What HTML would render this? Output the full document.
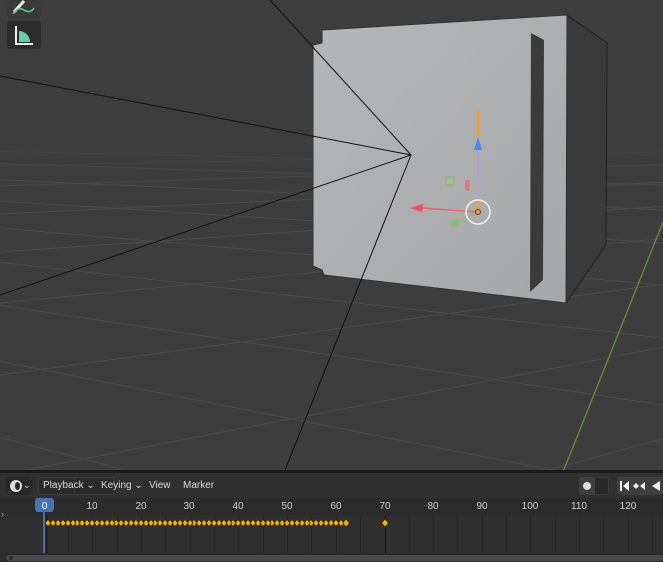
<!DOCTYPE html>
<html><head><meta charset="utf-8"><style>
*{margin:0;padding:0;box-sizing:border-box}
html,body{width:663px;height:562px;overflow:hidden}
body{background:#3d3d3d;font-family:"Liberation Sans",sans-serif;position:relative}
svg{position:absolute;left:0;top:0;display:block}
.t{position:absolute;color:#d8d8d8;font-size:10px;line-height:12px;white-space:nowrap}
</style></head><body>
<svg width="663" height="470" viewBox="0 0 663 470">
<defs>
<linearGradient id="g" x1="0" y1="0" x2="1" y2="1"><stop offset="0" stop-color="#b4b6b7"/><stop offset="1" stop-color="#a6a8a9"/></linearGradient>
<linearGradient id="fade" x1="0" y1="0" x2="0" y2="1"><stop offset="0" stop-color="#3d3d3d" stop-opacity="1"/><stop offset="0.55" stop-color="#3d3d3d" stop-opacity="1"/><stop offset="1" stop-color="#3d3d3d" stop-opacity="0"/></linearGradient>
</defs>
<rect width="663" height="470" fill="#3d3d3d"/>
<g stroke="#4b4b4b" stroke-width="1" fill="none">
<line x1="-1200" y1="125" x2="663" y2="166" opacity=".5"/>
<line x1="-1200" y1="125" x2="663" y2="185" opacity=".8"/>
<line x1="-1200" y1="125" x2="663" y2="210"/>
<line x1="-1200" y1="125" x2="663" y2="243"/>
<line x1="-1200" y1="125" x2="663" y2="285"/>
<line x1="-1200" y1="125" x2="663" y2="338"/>
<line x1="-1200" y1="125" x2="663" y2="405"/>
<line x1="-1200" y1="125" x2="663" y2="492"/>
<line x1="-1200" y1="125" x2="663" y2="610"/>
<line x1="-1200" y1="125" x2="663" y2="780"/>
<line x1="0" y1="166" x2="1800" y2="128" opacity=".5"/>
<line x1="0" y1="186" x2="1800" y2="128" opacity=".8"/>
<line x1="0" y1="214" x2="1800" y2="128"/>
<line x1="0" y1="252" x2="1800" y2="128"/>
<line x1="0" y1="303" x2="1800" y2="128"/>
<line x1="0" y1="375" x2="1800" y2="128"/>
<line x1="0" y1="475" x2="1800" y2="128"/>
<line x1="0" y1="620" x2="1800" y2="128"/>
<line x1="0" y1="830" x2="1800" y2="128"/>
<line x1="0" y1="1150" x2="1800" y2="128"/>
</g>
<rect x="0" y="0" width="663" height="150" fill="url(#fade)"/>
<line x1="663" y1="222" x2="563" y2="472" stroke="#6a8f2a" stroke-width="1.3"/>
<polygon points="567,15 607,43 606,245 566,303" fill="#3a3a3a" stroke="#222" stroke-width="1"/>
<polygon points="322,30 567,15 566,303 324,275 322,270 313,266 313,45 322,43" fill="url(#g)" stroke="#333" stroke-width="1"/>
<polygon points="531,33 544,40 543,280 530,292" fill="#3b3b3b"/>
<g stroke="#111" stroke-width="1" fill="none">
<line x1="270" y1="0" x2="411" y2="155"/>
<line x1="0" y1="76" x2="411" y2="155"/>
<line x1="0" y1="295" x2="411" y2="155"/>
<line x1="285" y1="470" x2="411" y2="155"/>
</g>
<rect x="446" y="177" width="8" height="8" fill="#9fc08f" stroke="#8db27a"/>
<rect x="466" y="181" width="3" height="9" fill="#d48a8a" stroke="#e06060" stroke-width=".8"/>
<line x1="478" y1="112" x2="478" y2="137" stroke="#ff9a1a" stroke-width="2"/>
<circle cx="478" cy="112" r="1.5" fill="#ff9a1a"/>
<polygon points="478,137 474,150 482,150" fill="#4b87ee"/>
<line x1="478" y1="150" x2="478" y2="200" stroke="#b39be0" stroke-width="1.5"/>
<line x1="478" y1="200" x2="478" y2="212" stroke="#ff9a1a" stroke-width="2"/>
<line x1="478" y1="212" x2="422" y2="208" stroke="#f26060" stroke-width="1.5"/>
<polygon points="410,208 423,204 422,212" fill="#f25060"/>
<line x1="478" y1="212" x2="458" y2="221" stroke="#8bc06a" stroke-width="1.5"/>
<ellipse cx="455" cy="223" rx="5" ry="3.5" transform="rotate(-25 455 223)" fill="#8bc06a"/>
<circle cx="478" cy="212" r="12" fill="none" stroke="#f0f0f0" stroke-width="1.6"/>
<circle cx="478" cy="212" r="2.5" fill="#f59b1c" stroke="#222" stroke-width=".7"/>
<rect x="7" y="0" width="34" height="18" rx="3" fill="#3a3a3a"/>
<path d="M14 12 L24 1" stroke="#eee" stroke-width="3"/>
<path d="M13 14 Q18 6 24 10 T34 8" stroke="#4fd49e" stroke-width="1.5" fill="none"/>
<rect x="7" y="21" width="34" height="28" rx="3" fill="#2c2c2c"/>
<path d="M16 26 V44 H33" stroke="#eee" stroke-width="2" fill="none"/>
<path d="M19 42 V31 A11 11 0 0 1 30 42 Z" fill="#62d0a0"/>
</svg>
<div style="position:absolute;left:0;top:470px;width:663px;height:3px;background:#1c1c1c"></div>
<div style="position:absolute;left:0;top:473px;width:663px;height:25px;background:#303030"></div>
<div style="position:absolute;left:6px;top:477px;width:26px;height:18px;background:#282828;border-radius:3px"></div>
<div style="position:absolute;left:10px;top:480px;width:12px;height:12px;border-radius:50%;background:#ddd"></div>
<div style="position:absolute;left:15px;top:482px;width:5px;height:8px;border-radius:50%;background:#282828"></div>
<div class="t" style="left:23px;top:479px;font-size:9px">⌄</div>
<div style="position:absolute;left:38px;top:477px;width:75px;height:18px;background:#2a2a2a;border-radius:3px 0 0 3px;border:1px solid #3a3a3a"></div>
<div style="position:absolute;left:74px;top:477px;width:40px;height:18px;background:#2a2a2a;border:1px solid #3a3a3a"></div>
<div class="t" style="left:43px;top:480px">Playback ⌄</div>
<div class="t" style="left:101px;top:480px">Keying ⌄</div>
<div class="t" style="left:149px;top:480px">View</div>
<div class="t" style="left:183px;top:480px">Marker</div>
<div style="position:absolute;left:579px;top:477px;width:30px;height:18px;background:#282828;border-radius:3px;border:1px solid #3a3a3a"></div>
<div style="position:absolute;left:579px;top:477px;width:16px;height:18px;background:#3e3e3e;border-radius:3px 0 0 3px"></div>
<div style="position:absolute;left:583px;top:482px;width:8px;height:8px;border-radius:50%;background:#ddd"></div>
<div style="position:absolute;left:617px;top:477px;width:46px;height:18px;background:#3e3e3e;border-radius:3px 0 0 3px"></div>
<svg width="663" height="562" viewBox="0 0 663 562">
<g fill="#eee">
<rect x="620" y="481" width="2" height="10"/><path d="M629 481 L623 486 L629 491 Z"/>
<path d="M633 486 L636 483 L639 486 L636 489 Z"/><path d="M640 486 L645 482 L645 490 Z"/><path d="M632 482 L632 490 L628 486 Z" opacity="0"/>
<path d="M660 481 L652 486 L660 491 Z"/>
</g>
<rect x="0" y="498" width="663" height="17" fill="#2b2b2b"/>
<rect x="0" y="515" width="663" height="38" fill="#2f2f2f"/>
<g stroke="#262626" stroke-width="1">
<line x1="68.5" y1="515" x2="68.5" y2="553"/><line x1="92.5" y1="515" x2="92.5" y2="553"/><line x1="117.5" y1="515" x2="117.5" y2="553"/><line x1="141.5" y1="515" x2="141.5" y2="553"/><line x1="165.5" y1="515" x2="165.5" y2="553"/><line x1="190.5" y1="515" x2="190.5" y2="553"/><line x1="214.5" y1="515" x2="214.5" y2="553"/><line x1="238.5" y1="515" x2="238.5" y2="553"/><line x1="263.5" y1="515" x2="263.5" y2="553"/><line x1="287.5" y1="515" x2="287.5" y2="553"/><line x1="311.5" y1="515" x2="311.5" y2="553"/><line x1="336.5" y1="515" x2="336.5" y2="553"/><line x1="360.5" y1="515" x2="360.5" y2="553"/><line x1="409.5" y1="515" x2="409.5" y2="553"/><line x1="433.5" y1="515" x2="433.5" y2="553"/><line x1="457.5" y1="515" x2="457.5" y2="553"/><line x1="482.5" y1="515" x2="482.5" y2="553"/><line x1="506.5" y1="515" x2="506.5" y2="553"/><line x1="530.5" y1="515" x2="530.5" y2="553"/><line x1="555.5" y1="515" x2="555.5" y2="553"/><line x1="579.5" y1="515" x2="579.5" y2="553"/><line x1="603.5" y1="515" x2="603.5" y2="553"/><line x1="628.5" y1="515" x2="628.5" y2="553"/><line x1="652.5" y1="515" x2="652.5" y2="553"/>
</g>
<line x1="385.5" y1="515" x2="385.5" y2="553" stroke="#151515"/>
<line x1="47" y1="515" x2="47" y2="553" stroke="#151515"/>
<g fill="#f5b10e" stroke="#3a2a00" stroke-width=".8">
<path d="M385 519 L388.5 523 L385 527 L381.5 523 Z"/>
<path d="M346 519 L349.5 523 L346 527 L342.5 523 Z"/>
<path d="M341 519.5 L344 523 L341 526.5 L338 523 Z"/><path d="M336 519.5 L339 523 L336 526.5 L333 523 Z"/><path d="M331 519.5 L334 523 L331 526.5 L328 523 Z"/><path d="M326 519.5 L329 523 L326 526.5 L323 523 Z"/><path d="M321 519.5 L324 523 L321 526.5 L318 523 Z"/><path d="M316 519.5 L319 523 L316 526.5 L313 523 Z"/><path d="M311 519.5 L314 523 L311 526.5 L308 523 Z"/><path d="M307 519.5 L310 523 L307 526.5 L304 523 Z"/><path d="M302 519.5 L305 523 L302 526.5 L299 523 Z"/><path d="M297 519.5 L300 523 L297 526.5 L294 523 Z"/><path d="M292 519.5 L295 523 L292 526.5 L289 523 Z"/><path d="M287 519.5 L290 523 L287 526.5 L284 523 Z"/><path d="M282 519.5 L285 523 L282 526.5 L279 523 Z"/><path d="M277 519.5 L280 523 L277 526.5 L274 523 Z"/><path d="M272 519.5 L275 523 L272 526.5 L269 523 Z"/><path d="M268 519.5 L271 523 L268 526.5 L265 523 Z"/><path d="M263 519.5 L266 523 L263 526.5 L260 523 Z"/><path d="M258 519.5 L261 523 L258 526.5 L255 523 Z"/><path d="M253 519.5 L256 523 L253 526.5 L250 523 Z"/><path d="M248 519.5 L251 523 L248 526.5 L245 523 Z"/><path d="M243 519.5 L246 523 L243 526.5 L240 523 Z"/><path d="M238 519.5 L241 523 L238 526.5 L235 523 Z"/><path d="M233 519.5 L236 523 L233 526.5 L230 523 Z"/><path d="M229 519.5 L232 523 L229 526.5 L226 523 Z"/><path d="M224 519.5 L227 523 L224 526.5 L221 523 Z"/><path d="M219 519.5 L222 523 L219 526.5 L216 523 Z"/><path d="M214 519.5 L217 523 L214 526.5 L211 523 Z"/><path d="M209 519.5 L212 523 L209 526.5 L206 523 Z"/><path d="M204 519.5 L207 523 L204 526.5 L201 523 Z"/><path d="M199 519.5 L202 523 L199 526.5 L196 523 Z"/><path d="M194 519.5 L197 523 L194 526.5 L191 523 Z"/><path d="M190 519.5 L193 523 L190 526.5 L187 523 Z"/><path d="M185 519.5 L188 523 L185 526.5 L182 523 Z"/><path d="M180 519.5 L183 523 L180 526.5 L177 523 Z"/><path d="M175 519.5 L178 523 L175 526.5 L172 523 Z"/><path d="M170 519.5 L173 523 L170 526.5 L167 523 Z"/><path d="M165 519.5 L168 523 L165 526.5 L162 523 Z"/><path d="M160 519.5 L163 523 L160 526.5 L157 523 Z"/><path d="M155 519.5 L158 523 L155 526.5 L152 523 Z"/><path d="M151 519.5 L154 523 L151 526.5 L148 523 Z"/><path d="M146 519.5 L149 523 L146 526.5 L143 523 Z"/><path d="M141 519.5 L144 523 L141 526.5 L138 523 Z"/><path d="M136 519.5 L139 523 L136 526.5 L133 523 Z"/><path d="M131 519.5 L134 523 L131 526.5 L128 523 Z"/><path d="M126 519.5 L129 523 L126 526.5 L123 523 Z"/><path d="M121 519.5 L124 523 L121 526.5 L118 523 Z"/><path d="M116 519.5 L119 523 L116 526.5 L113 523 Z"/><path d="M112 519.5 L115 523 L112 526.5 L109 523 Z"/><path d="M107 519.5 L110 523 L107 526.5 L104 523 Z"/><path d="M102 519.5 L105 523 L102 526.5 L99 523 Z"/><path d="M97 519.5 L100 523 L97 526.5 L94 523 Z"/><path d="M92 519.5 L95 523 L92 526.5 L89 523 Z"/><path d="M87 519.5 L90 523 L87 526.5 L84 523 Z"/><path d="M82 519.5 L85 523 L82 526.5 L79 523 Z"/><path d="M77 519.5 L80 523 L77 526.5 L74 523 Z"/><path d="M73 519.5 L76 523 L73 526.5 L70 523 Z"/><path d="M68 519.5 L71 523 L68 526.5 L65 523 Z"/><path d="M63 519.5 L66 523 L63 526.5 L60 523 Z"/><path d="M58 519.5 L61 523 L58 526.5 L55 523 Z"/><path d="M53 519.5 L56 523 L53 526.5 L50 523 Z"/><path d="M48 519.5 L51 523 L48 526.5 L45 523 Z"/>
</g>
<line x1="44" y1="510" x2="44" y2="553" stroke="#5680c2" stroke-width="1.5"/>
<rect x="35" y="498" width="19" height="14" rx="3" fill="#4772b3"/>
<text x="44.5" y="509" fill="#fff" font-size="10" font-family="Liberation Sans" text-anchor="middle">0</text>
<g fill="#cfcfcf" font-size="10" font-family="Liberation Sans" text-anchor="middle">
<text x="92" y="509">10</text><text x="141" y="509">20</text><text x="189" y="509">30</text><text x="238" y="509">40</text><text x="287" y="509">50</text><text x="336" y="509">60</text><text x="385" y="509">70</text><text x="433" y="509">80</text><text x="482" y="509">90</text><text x="530" y="509">100</text><text x="579" y="509">110</text><text x="628" y="509">120</text>
</g>
<text x="1" y="517" fill="#aaa" font-size="9" font-family="Liberation Sans">›</text>
<rect x="0" y="553" width="663" height="9" fill="#2b2b2b"/>
<rect x="6" y="555" width="657" height="6" rx="3" fill="#4a4a4a"/>
<circle cx="11" cy="558" r="2" fill="#2b2b2b"/>
</svg>
</body></html>
